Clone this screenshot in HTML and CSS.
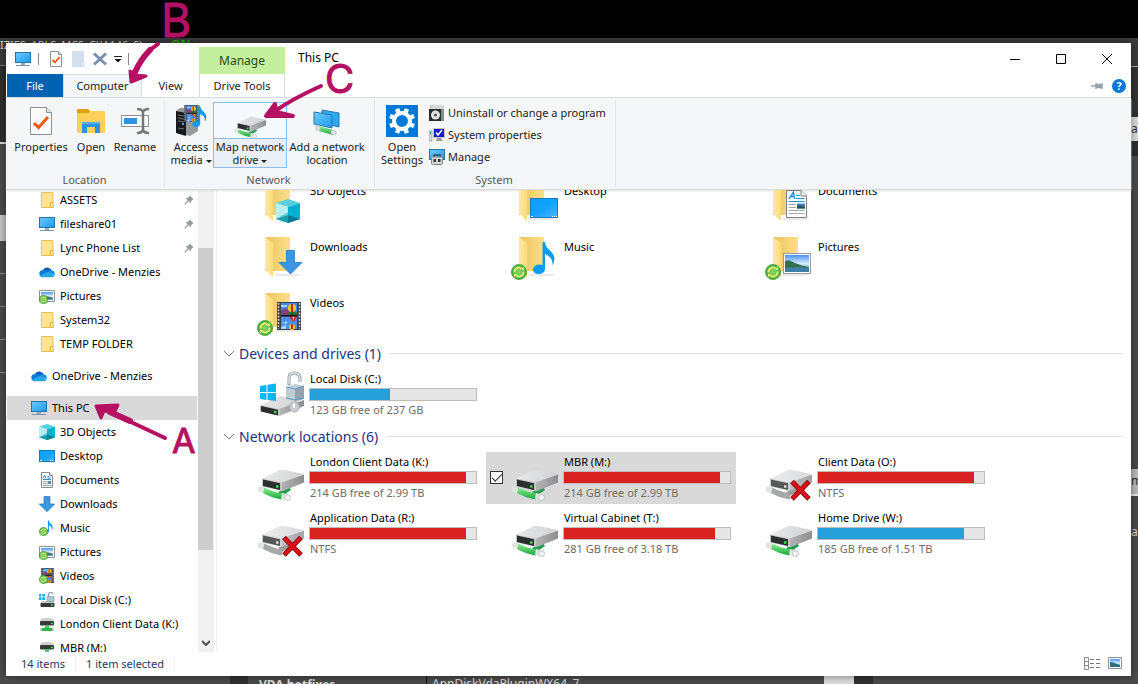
FILE: index.html
```html
<!DOCTYPE html>
<html lang="en">
<head>
<meta charset="utf-8">
<title>This PC</title>
<link rel="stylesheet" href="styles.css">
</head>
<body>
<svg class="defs" aria-hidden="true">
  <defs>
    <linearGradient id="gScreen" x1="0" y1="0" x2="1" y2="1"><stop offset="0" stop-color="#6fcbff"/><stop offset="1" stop-color="#1a9af0"/></linearGradient>
    <linearGradient id="gDesk" x1="0" y1="0" x2="1" y2="1"><stop offset="0" stop-color="#109df9"/><stop offset=".5" stop-color="#12a2ff"/><stop offset="1" stop-color="#45b6ff"/></linearGradient>
    <linearGradient id="gBack" x1="0" y1="0" x2="1" y2="0"><stop offset="0" stop-color="#e9c25c"/><stop offset="1" stop-color="#ffe08a"/></linearGradient>
    <linearGradient id="gFlap" x1="0" y1="0" x2="1" y2="0"><stop offset="0" stop-color="#ffe9a4"/><stop offset="1" stop-color="#fbd978"/></linearGradient>
    <linearGradient id="gSky" x1="0" y1="0" x2="0" y2="1"><stop offset="0" stop-color="#4a92f0"/><stop offset=".5" stop-color="#d5ecfb"/><stop offset="1" stop-color="#5ba0cf"/></linearGradient>
    <linearGradient id="gSide" x1="0" y1="0" x2="1" y2="0"><stop offset="0" stop-color="#b5b5b7"/><stop offset="1" stop-color="#8d8d90"/></linearGradient>
    <linearGradient id="gTop" x1="0" y1="0" x2="1" y2="0"><stop offset="0" stop-color="#e9e9eb"/><stop offset="1" stop-color="#d0d1d4"/></linearGradient>
    <linearGradient id="gPipe" x1="0" y1="0" x2="0" y2="1"><stop offset="0" stop-color="#8df08f"/><stop offset="1" stop-color="#17a63c"/></linearGradient>
    <radialGradient id="gSync"><stop offset="0" stop-color="#8fd86d"/><stop offset="1" stop-color="#45aa3c"/></radialGradient>
  </defs>
  <symbol id="sync" viewBox="0 0 16 16"><circle cx="8" cy="8" r="7.6" fill="url(#gSync)" stroke="#3b9c3a" stroke-width=".7"/><path d="M3.500 8.500A4.500 4.500 0 0 1 10.500 4.300M12.500 7.500A4.500 4.500 0 0 1 5.500 11.700" fill="none" stroke="#e7f06d" stroke-width="1.800"/><path d="M9.300 5.900h3.700V2.400zM6.700 10.100H3v3.500z" fill="#e7f06d"/></symbol>
  <symbol id="pc" viewBox="0 0 16 16"><rect x=".5" y="1.5" width="15" height="10" fill="url(#gScreen)" stroke="#2474a8"/><path d="M6 12h4v2H6z" fill="#8faec2"/><path d="M1 14.500h14" stroke="#7894a8" stroke-width="1"/></symbol>
  <symbol id="folder" viewBox="0 0 16 16"><path d="M2.500 .5h11.500v15H2.500z" fill="#ffe38f" stroke="#e8c24b"/><path d="M11.500 10.500h2.500v5h-2.500z" fill="#ffefb5" stroke="#e3b93c"/></symbol>
  <symbol id="pin" viewBox="0 0 12 12"><path d="M7 .5 11.500 5 10 5.700 8.600 7.400 8.300 10 5.700 7.500 1.500 11.500.8 11.300.5 10.500 4.500 6.300 2 3.800 4.600 3.400 6.300 2z" fill="#8d99a3"/></symbol>
  <symbol id="cloud" viewBox="0 0 16 16"><path d="M4 6.500A4.600 4.600 0 0 1 12.500 6L9 9z" fill="#0b5fbe"/><path d="M3.500 6.200c2-1 4 0 5.500 1.500L4 13A3.400 3.400 0 0 1 3.500 6.200z" fill="#0f78d4"/><path d="M12 6a3.700 3.700 0 0 1 3.500 5L8.500 8.500C9.500 6.700 10.500 6 12 6z" fill="#1590df"/><path d="M1.200 11.500 8.500 8l7 3.200a2.600 2.600 0 0 1-2.500 2H4a3.300 3.300 0 0 1-2.800-1.700z" fill="#27a4ea"/></symbol>
  <symbol id="pics" viewBox="0 0 16 16"><path d="M.5 2.500h15v11H.5z" fill="#fff" stroke="#8d9296"/><path d="M2 4h12v8H2z" fill="url(#gSky)"/><path d="M2 8.500c4-1 7 0 12 1.500v1H2z" fill="#47745c"/><use href="#sync" x="0" y="7" width="9" height="9"/></symbol>
  <symbol id="cube" viewBox="0 0 24 24"><path d="M12 0 24 4 12 8 0 4z" fill="#54cfdd"/><path d="M0 4l12 4v16L0 20z" fill="#b9edf1"/><path d="M0 20l12-7v11z" fill="#5cd0da"/><path d="M12 8l12-4v16l-12 4z" fill="#00b2d0"/><path d="M12 16l12 4-12 4z" fill="#047b92"/><path d="M12 16 0 20l12 4z" fill="#1d9eae"/></symbol>
  <symbol id="desk" viewBox="0 0 16 16"><rect x=".5" y="2.500" width="15" height="11" fill="url(#gDesk)" stroke="#1878bd"/><path d="M1 12.500h2m8 0h1m1 0h1" stroke="#fff"/></symbol>
  <symbol id="doc" viewBox="0 0 16 16"><path d="M2.500.5h8l3 3v12h-11z" fill="#fff" stroke="#85898c"/><path d="M10.500.5v3h3" fill="#eee" stroke="#85898c"/><path d="M4 7.500h8M8.500 4.500H10M8.500 6H12" stroke="#2a8ed6"/><path d="M4 6.500 5.500 3 7 6.500" stroke="#2a8ed6" fill="none"/><path d="M4 9.500h3.500M4 11.500h3.500M4 13.500h8" stroke="#9ba0a3"/><path d="M8.500 9h3.500v3H8.500z" fill="#5a88ad"/></symbol>
  <symbol id="down" viewBox="0 0 16 16"><path d="M5 .5h6v7.500h4.700L8 15.700.3 8H5z" fill="#3b97e5" stroke="#2277c0" stroke-width=".7"/></symbol>
  <symbol id="note" viewBox="0 0 22 32"><path d="M9.500 0h2.500c.5 5 3.500 7 6 9.500 4.500 4.500 4 9.500 1.500 14 .5-6-2.500-9.500-7.500-11.500V27c0 3-3 5-6.500 5S0 30.300 0 27.500 3 22.500 6.500 22.500c1.200 0 2.200.2 3 .6z" fill="#0a9cf2"/></symbol>
  <symbol id="film" viewBox="0 0 24 28"><path d="M0 0h24v28H0z" fill="#3d4045"/><path d="M1.500 1v26M22.500 1v26" stroke="#e8e8e8" stroke-width="1.500" stroke-dasharray="1.700 1.500"/><path d="M4 1h16v12H4z" fill="#3d8cf0"/><path d="M4 14.500h16V27H4z" fill="#4b90ee"/><path d="M4 9l5-3 4 4 3-2 4 3v2H4z" fill="#8a3f76"/><path d="M10 12c3-3 7-3 10-1v2H10z" fill="#2a7336"/><path d="M4 3h6v2H4z" fill="#a9d5ff"/><circle cx="15" cy="6" r="4" fill="#f4c81e"/><path d="M14 2h2v8h-2z" fill="#c62617"/><path d="M14 11h2v1.500h-2z" fill="#5a2d0c"/><path d="M12 14.500h8l-3.500 6z" fill="#c52c1c"/><path d="M15.500 14.500h2l-1 5z" fill="#f4c81e"/><circle cx="15" cy="25" r="3" fill="#f4c81e"/><path d="M14 22.300h2V27h-2z" fill="#c62617"/><path d="M5 21l5-2v3zM4 25l5-2v4H4z" fill="#a9d5ff"/><path d="M4 13.700h16" stroke="#16181b" stroke-width="1.500"/></symbol>
  <symbol id="videos" viewBox="0 0 16 16"><use href="#film" x="2" y="0" width="13" height="15"/><use href="#sync" x="0" y="7" width="9" height="9"/></symbol>
  <symbol id="music" viewBox="0 0 16 16"><use href="#note" x="5" y="0" width="9" height="14"/><use href="#sync" x="0" y="7" width="9" height="9"/></symbol>
  <symbol id="disk" viewBox="0 0 16 16"><path d="M0 2h2.500v2.500H0zm3.300 0H6v2.500H3.300zM0 5.300h2.500V8H0zm3.300 0H6V8H3.300z" fill="#12b1ee"/><path d="M3 9h11l1.500 2v1h-14v-1z" fill="#c8cacc"/><rect x="1.500" y="11" width="14" height="4" rx="1" fill="#37393b"/><path d="M12 13h2" stroke="#3ee65a" stroke-width="1.500"/><path d="M9.500 5V2.500a2.300 2.300 0 0 1 4.500-.5" fill="none" stroke="#93a5b1" stroke-width="1.300"/><path d="M8 4.500h7v5H8z" fill="#b2c6d2" stroke="#7793a5" stroke-width=".6"/></symbol>
  <symbol id="net" viewBox="0 0 16 16"><path d="M3 2h10l2 3v1H1V5z" fill="#cfd1d3"/><rect x="1" y="5" width="14" height="4.500" rx="1" fill="#37393b"/><path d="M12 7.500h2" stroke="#3ee65a" stroke-width="1.500"/><path d="M6 9.500h4v3H6z" fill="#4fc266"/><path d="M1 12h14v3H1z" fill="#c5ccc7"/><path d="M3 12h10v3H3z" fill="#2fb44a"/></symbol>
  <symbol id="folder48" viewBox="0 0 48 48"><path d="M20 42h26l-5 2H18z" fill="#e9e9e9"/><path d="M9 5h25v34H9z" fill="url(#gBack)"/><path d="M9 5l8.500 6.500L17 45l-8-7.500z" fill="url(#gFlap)"/></symbol>
  <symbol id="t-cube" viewBox="0 0 48 48"><use href="#folder48"/><use href="#cube" x="20" y="23" width="24" height="24"/></symbol>
  <symbol id="t-desk" viewBox="0 0 48 48"><use href="#folder48"/><rect x="20.500" y="22.500" width="27" height="19" fill="url(#gDesk)" stroke="#1878bd"/><path d="M21 40.500h2m19 0h1m1 0h1m1 0h1" stroke="#fff"/></symbol>
  <symbol id="t-doc" viewBox="0 0 48 48"><use href="#folder48"/><path d="M22.500 14.500H37l5.500 5.500v21.500h-20z" fill="#fff" stroke="#7c8083"/><path d="M37 14.500V20h5.500" fill="#eee" stroke="#7c8083"/><path d="M32 19.500h4m-4 3h8.500M24.500 25.500h16" stroke="#1f94d6"/><path d="M25 23l4.500-7 1 7m-4-2.500h4" fill="none" stroke="#1f94d6" stroke-width="1.400"/><path d="M24.500 28.500H32m-7.500 3H32m-7.500 3h16m-16 3h16" stroke="#a3a6a8"/><path d="M33 27.500h8v5h-8z" fill="#447db8"/><path d="M33 30c3-1 5 0 8 1v1.500h-8z" fill="#26525a"/></symbol>
  <symbol id="t-down" viewBox="0 0 48 48"><use href="#folder48"/><path d="M30.500 18.500h8v12H46L34.500 42 23 30.500h7.500z" fill="#3b97e5" stroke="#2277c0" stroke-width=".8"/></symbol>
  <symbol id="t-music" viewBox="0 0 48 48"><use href="#folder48"/><use href="#note" x="23" y="10" width="22" height="32"/><use href="#sync" x="1" y="32" width="16" height="16"/></symbol>
  <symbol id="t-pics" viewBox="0 0 48 48"><use href="#folder48"/><rect x="19.500" y="21.500" width="27" height="20" fill="#fff" stroke="#9a9da0"/><path d="M21 23h24v17H21z" fill="url(#gSky)"/><path d="M21 29c4-2 6 0 10 2 5 2 9 3 14 4v1c-8 1-16 0-24 1z" fill="#38704f"/><path d="M21 36c8-1 16-1 24 0v4H21z" fill="#3d7fa9"/><use href="#sync" x="1" y="32" width="16" height="16"/></symbol>
  <symbol id="t-video" viewBox="0 0 48 48"><use href="#folder48"/><use href="#film" x="21" y="14" width="24" height="28"/><use href="#sync" x="1" y="32" width="16" height="16"/></symbol>
  <symbol id="drive" viewBox="0 0 48 48"><path d="M6 24.500 24 16q2-.5 4 0l20 4-22 9z" fill="url(#gTop)"/><path d="M25.500 28.500 48 20.500v8l-22.500 9z" fill="url(#gSide)"/><path d="M6 24.500l20 4V37L6 32.500z" fill="#c3c4c6"/><path d="M7 25.500l17 3.700V36L7 32z" fill="#2c2e30"/></symbol>
  <symbol id="t-net" viewBox="0 0 48 48"><path d="M22 38l11-5 2 3-9 6z" fill="#1f9d4e"/><use href="#drive"/><path d="M20 32.500h2.500" stroke="#35e040" stroke-width="2.500"/><path d="M8 33.500q12 5.500 18 5.500v6.500Q16 44 7 39z" fill="url(#gPipe)"/><path d="M3 32l5 1.500-1 5.500-5-1.500q-1-4 1-5.500zM26 39l6 1.500-1 5.500-6-1z" fill="#e2e4e4"/><circle cx="31.500" cy="43.500" r="3" fill="#f2f3f3" stroke="#b4b7b8" stroke-width=".8"/></symbol>
  <symbol id="t-off" viewBox="0 0 48 48"><path d="M22 38l11-5 2 3-9 6z" fill="#9b9b9b"/><use href="#drive" opacity=".8"/><path d="M20 32.500h2.500" stroke="#ddd" stroke-width="2.500"/><path d="M8 33.500q12 5.500 18 5.500v6.500Q16 44 7 39z" fill="#a7a8a9"/><path d="M3 32l5 1.500-1 5.500-5-1.500q-1-4 1-5.500z" fill="#e2e4e4"/><path d="M28 27.500l17 17.500m0-17.500L28 45" stroke="#8d0910" stroke-width="5"/><path d="M28.500 28l16 16.500m0-16.500-16 16.500" stroke="#e01019" stroke-width="3.200"/></symbol>
  <symbol id="t-local" viewBox="0 0 48 48"><path d="M4 34.500 24 25l22 4-22 9z" fill="url(#gTop)"/><path d="M23 38l25-9v6l-25 10z" fill="url(#gSide)"/><path d="M4 34l20 4v7L4 40.500z" fill="#c3c4c6"/><path d="M5 35l17 3.700v5.700L5 40.500z" fill="#2c2e30"/><path d="M18 41h2.500" stroke="#35e040" stroke-width="2.500"/><path d="M4 15l6.500-1v7H4zm7.500-1.200L20 12.500V21h-8.500zM4 22h6.500v7L4 28zm7.500 0H20v8l-8.500-1z" fill="#0db4f2"/><circle cx="38.500" cy="36" r="5" fill="#c9ccce" stroke="#989c9f" stroke-width=".7"/><path d="M38 32v5" stroke="#fff" stroke-width="2"/><path d="M33 14V7q0-5 5.500-5T44 8v3" fill="none" stroke="#8f989e" stroke-width="3"/><path d="M33 13V7q0-5 5.500-5T44 8v3" fill="none" stroke="#e4e8eb" stroke-width="1.400"/><path d="M30 16l9-3 9 2v13l-9 2-9-2z" fill="#c0ccd4"/><path d="M39 18l9-3v13l-9 2z" fill="#93a4b0"/><path d="M30 16l9 2 9-3M30 27l9 2 9-2" fill="none" stroke="#5b9cc9"/></symbol>
  <symbol id="props" viewBox="0 0 32 32"><path d="M5.500 2.500h16l5 5v22h-21z" fill="#fafafa" stroke="#8c9093"/><path d="M21.500 2.500v5h5" fill="#e5e5e5" stroke="#8c9093"/><path d="M9 18l4.500 4.500L23 12" fill="none" stroke="#f0590f" stroke-width="3"/></symbol>
  <symbol id="props16" viewBox="0 0 16 16"><path d="M2.500.5h8l3 3v12h-11z" fill="#fafafa" stroke="#8c9093"/><path d="M10.500.5v3h3" fill="#e5e5e5" stroke="#8c9093"/><path d="M4.500 9l2.500 2.500L11.500 6" fill="none" stroke="#f0590f" stroke-width="1.800"/></symbol>
  <symbol id="open" viewBox="0 0 32 32"><path d="M2 5q0-1 1-1h10l2 2h14q1 0 1 1v20q0 1-1 1H3q-1 0-1-1z" fill="#fdd05a"/><path d="M2 5q0-1 1-1h10l2 2-2 2H2z" fill="#dfa000"/><path d="M7 17h18v11h-5v-6h-8v6H7z" fill="#2f93e0"/><path d="M7 17h18v2H7z" fill="#57aeed"/></symbol>
  <symbol id="rename" viewBox="0 0 32 32"><rect x="2.500" y="10.500" width="27" height="11" fill="#fdfdfd" stroke="#8c9093"/><rect x="5" y="13" width="13" height="6" fill="#2f93e0"/><path d="M18 4q5 0 6 3 1-3 6-3M18 28q5 0 6-3 1 3 6 3M24 6v20" fill="none" stroke="#74787b" stroke-width="2.500"/></symbol>
  <symbol id="access" viewBox="0 0 32 32"><path d="M1 6l4-3h18v23l-8 5-14-4z" fill="#97999c"/><path d="M1 6l10 2v23L1 28z" fill="#17191b"/><path d="M3 10l6 1m-6 2 6 1m-6 2 6 1m-6 6 6 1" stroke="#6e7377"/><path d="M7 19h2" stroke="#32a8f5" stroke-width="2"/><use href="#film" x="9" y="0" width="15" height="17"/><use href="#note" x="17" y="1" width="15" height="21"/></symbol>
  <symbol id="mapnet" viewBox="0 0 32 32"><use href="#t-net" x="-1" y="0" width="33" height="33"/></symbol>
  <symbol id="addnet" viewBox="0 0 32 32"><path d="M11 5l17 3v14l-17-4z" fill="#2ca7f2" stroke="#2878aa"/><path d="M3 7l18 3v13L3 19z" fill="url(#gScreen)" stroke="#2878aa"/><path d="M8 21l14 4v5L8 26z" fill="url(#gPipe)"/><path d="M5 20l4 1v5l-4-1zM20 25l5 1v4l-5-1z" fill="#dfe2e2" stroke="#b3b6b7" stroke-width=".6"/></symbol>
  <symbol id="gear" viewBox="0 0 32 32"><path d="M0 0h32v32H0z" fill="#0078d7"/><circle cx="16" cy="16" r="8" fill="none" stroke="#fff" stroke-width="4"/><path d="M16 3v5m0 16v5M3 16h5m16 0h5M6.800 6.800l3.500 3.500m11.400 11.400 3.500 3.500m0-18.400-3.500 3.500M10.300 21.700l-3.500 3.500" stroke="#fff" stroke-width="4.500" transform="rotate(22.500 16 16)"/></symbol>
  <symbol id="uninst" viewBox="0 0 16 16"><path d="M1 0h13l1 3v13H3z" fill="#b8ad86"/><path d="M2 0h13v4H2z" fill="#d5d7d9"/><path d="M10 4h5v12h-5z" fill="#6e9885"/><rect y="4" width="12" height="12" fill="#2a2a2a"/><circle cx="6.500" cy="10" r="4.500" fill="#dfe2e3"/><circle cx="6.500" cy="10" r="1.500" fill="#555"/></symbol>
  <symbol id="sysprop" viewBox="0 0 16 16"><path d="M4 1h12v10H4z" fill="#c6c4bd"/><path d="M5 2h10v8H5z" fill="#1020c4"/><path d="M7 5.500 9 8l4-5" fill="none" stroke="#fff" stroke-width="1.500"/><path d="M8 11h4l2 3H7z" fill="#9c9b98"/><path d="M0 4h3v10H0z" fill="#d9d9d9" stroke="#8a8a8a" stroke-width=".6"/><path d="M1 5h1v2H1z" fill="#22a52c"/></symbol>
  <symbol id="manage" viewBox="0 0 16 16"><rect x=".5" y=".5" width="15" height="10" fill="url(#gScreen)" stroke="#2474a8"/><path d="M5 8V6h6v2" fill="none" stroke="#454545" stroke-width="1.500"/><rect x="2.500" y="8" width="11" height="7.500" rx="1" fill="#d5d7d8" stroke="#848789"/><path d="M4.500 10H7v3H4.500zM9 10h2.500v3H9z" fill="#343638"/></symbol>
</svg>

<div class="backdrop" aria-hidden="true">
  <div class="blackout"></div>
  <div class="edge edge-left"></div>
  <div class="edge edge-right"></div>
  <span class="bt bt-name">IZIES_APLS_MCS_CXA146_S)</span><span class="bt bt-on">ON</span>
  <span class="bt bt-ag">ag</span><span class="bt bt-m">m</span><span class="bt bt-ap">ap</span>
  <div class="strip"></div>
  <span class="bt bt-vda">VDA hotfixes</span><span class="bt bt-app">AppDiskVdaPluginWX64_7</span>
</div>

<main class="window">
  <header class="top">
    <div class="qat">
      <svg class="i16"><use href="#pc"/></svg>
      <i class="bar first"></i>
      <button class="q" aria-label="Properties"><svg class="i16"><use href="#props16"/></svg></button>
      <button class="q" aria-label="New folder"><svg class="i16" viewBox="0 0 16 16"><path d="M2 0h12v16H2z" fill="#d5e0ef"/><path d="M11 10h3v6h-3z" fill="#e6edf7" stroke="#bccbdf" stroke-width=".6"/></svg></button>
      <button class="q" aria-label="Delete"><svg class="i16" viewBox="0 0 16 16"><path d="M2 2.500l12 11m0-11-12 11" stroke="#7b8eb0" stroke-width="3"/></svg></button>
      <button class="q" aria-label="Customize toolbar"><svg width="8" height="8" viewBox="0 0 8 8"><path d="M0 1.500h8" stroke="#222"/><path d="M.5 4h7L4 7.500z" fill="#111"/></svg></button>
      <i class="bar"></i>
    </div>
    <div class="context">Manage</div>
    <h1 class="title">This PC</h1>
    <div class="controls">
      <button aria-label="Minimize"><svg width="12" height="12"><path d="M1 6.500h10" stroke="#000"/></svg></button>
      <button aria-label="Maximize"><svg width="12" height="12"><path d="M1.500 1.500h9v9h-9z" fill="none" stroke="#000"/></svg></button>
      <button aria-label="Close"><svg width="12" height="12"><path d="M1 1l10 10m0-10L1 11" stroke="#000"/></svg></button>
    </div>
    <nav class="tabs">
      <button class="tab file">File</button>
      <button class="tab active">Computer</button>
      <button class="tab">View</button>
    </nav>
    <button class="tab tools">Drive Tools</button>
    <div class="help">
      <button aria-label="Pin the ribbon"><svg width="12" height="8" viewBox="0 0 12 8"><path d="M0 4h5M5 1v6m1-4.500h5v3H6zM11 1v6" stroke="#98a2aa" stroke-width="1.500" fill="#98a2aa"/></svg></button>
      <button class="q-mark" aria-label="Help">?</button>
    </div>
  </header>

  <section class="ribbon" aria-label="Ribbon">
    <div class="group location">
      <div class="tools-row">
        <button class="big"><svg class="i32"><use href="#props"/></svg><span>Properties</span></button>
        <button class="big"><svg class="i32"><use href="#open"/></svg><span>Open</span></button>
        <button class="big"><svg class="i32"><use href="#rename"/></svg><span>Rename</span></button>
      </div>
      <p class="caption">Location</p>
    </div>
    <div class="group network">
      <div class="tools-row">
        <button class="big"><svg class="i32"><use href="#access"/></svg><span>Access<br>media <i class="caret"></i></span></button>
        <button class="big split"><svg class="i32"><use href="#mapnet"/></svg><span>Map network<br>drive <i class="caret"></i></span></button>
        <button class="big"><svg class="i32"><use href="#addnet"/></svg><span>Add a network<br>location</span></button>
      </div>
      <p class="caption">Network</p>
    </div>
    <div class="group system">
      <div class="tools-row">
        <button class="big"><svg class="i32"><use href="#gear"/></svg><span>Open<br>Settings</span></button>
        <div class="stack">
          <button class="small"><svg class="i16"><use href="#uninst"/></svg>Uninstall or change a program</button>
          <button class="small"><svg class="i16"><use href="#sysprop"/></svg>System properties</button>
          <button class="small"><svg class="i16"><use href="#manage"/></svg>Manage</button>
        </div>
      </div>
      <p class="caption">System</p>
    </div>
  </section>

  <div class="content">
    <nav class="side" aria-label="Navigation pane">
      <ul class="tree">
        <li><a href="#"><svg class="i16"><use href="#folder"/></svg>ASSETS<svg class="pin"><use href="#pin"/></svg></a></li>
        <li><a href="#"><svg class="i16"><use href="#pc"/></svg>fileshare01<svg class="pin"><use href="#pin"/></svg></a></li>
        <li><a href="#"><svg class="i16"><use href="#folder"/></svg>Lync Phone List<svg class="pin"><use href="#pin"/></svg></a></li>
        <li><a href="#"><svg class="i16"><use href="#cloud"/></svg>OneDrive - Menzies</a></li>
        <li><a href="#"><svg class="i16"><use href="#pics"/></svg>Pictures</a></li>
        <li><a href="#"><svg class="i16"><use href="#folder"/></svg>System32</a></li>
        <li><a href="#"><svg class="i16"><use href="#folder"/></svg>TEMP FOLDER</a></li>
        <li class="root"><a href="#"><svg class="i16"><use href="#cloud"/></svg>OneDrive - Menzies</a></li>
        <li class="root current"><a href="#" aria-current="page"><svg class="i16"><use href="#pc"/></svg>This PC</a></li>
        <li><a href="#"><svg class="i16"><use href="#cube"/></svg>3D Objects</a></li>
        <li><a href="#"><svg class="i16"><use href="#desk"/></svg>Desktop</a></li>
        <li><a href="#"><svg class="i16"><use href="#doc"/></svg>Documents</a></li>
        <li><a href="#"><svg class="i16"><use href="#down"/></svg>Downloads</a></li>
        <li><a href="#"><svg class="i16"><use href="#music"/></svg>Music</a></li>
        <li><a href="#"><svg class="i16"><use href="#pics"/></svg>Pictures</a></li>
        <li><a href="#"><svg class="i16"><use href="#videos"/></svg>Videos</a></li>
        <li><a href="#"><svg class="i16"><use href="#disk"/></svg>Local Disk (C:)</a></li>
        <li><a href="#"><svg class="i16"><use href="#net"/></svg>London Client Data (K:)</a></li>
        <li><a href="#"><svg class="i16"><use href="#net"/></svg>MBR (M:)</a></li>
      </ul>
      <div class="scroll"><div class="thumb"></div><svg class="arrow" width="8" height="6"><path d="M0 1l4 4 4-4" fill="none" stroke="#505050" stroke-width="2"/></svg></div>
    </nav>

    <section class="files">
      <div class="files-inner">
        <div class="tiles folders">
          <div class="tile"><svg class="i48"><use href="#t-cube"/></svg><div class="info"><p>3D Objects</p></div></div>
          <div class="tile"><svg class="i48"><use href="#t-desk"/></svg><div class="info"><p>Desktop</p></div></div>
          <div class="tile"><svg class="i48"><use href="#t-doc"/></svg><div class="info"><p>Documents</p></div></div>
          <div class="tile"><svg class="i48"><use href="#t-down"/></svg><div class="info"><p>Downloads</p></div></div>
          <div class="tile"><svg class="i48"><use href="#t-music"/></svg><div class="info"><p>Music</p></div></div>
          <div class="tile"><svg class="i48"><use href="#t-pics"/></svg><div class="info"><p>Pictures</p></div></div>
          <div class="tile"><svg class="i48"><use href="#t-video"/></svg><div class="info"><p>Videos</p></div></div>
        </div>
        <h2><svg width="12" height="8"><path d="M1 1l5 5 5-5" fill="none" stroke="#777"/></svg>Devices and drives (1)</h2>
        <div class="tiles">
          <div class="tile"><svg class="i48"><use href="#t-local"/></svg><div class="info"><p>Local Disk (C:)</p><div class="meter"><div class="fill" style="width:48%"></div></div><p class="sub">123 GB free of 237 GB</p></div></div>
        </div>
        <h2><svg width="12" height="8"><path d="M1 1l5 5 5-5" fill="none" stroke="#777"/></svg>Network locations (6)</h2>
        <div class="tiles">
          <div class="tile"><svg class="i48"><use href="#t-net"/></svg><div class="info"><p>London Client Data (K:)</p><div class="meter"><div class="fill full" style="width:94%"></div></div><p class="sub">214 GB free of 2.99 TB</p></div></div>
          <div class="tile picked"><input type="checkbox" checked aria-label="Select MBR (M:)"><svg class="i48"><use href="#t-net"/></svg><div class="info"><p>MBR (M:)</p><div class="meter"><div class="fill full" style="width:94%"></div></div><p class="sub">214 GB free of 2.99 TB</p></div></div>
          <div class="tile"><svg class="i48"><use href="#t-off"/></svg><div class="info"><p>Client Data (O:)</p><div class="meter"><div class="fill full" style="width:94%"></div></div><p class="sub">NTFS</p></div></div>
          <div class="tile"><svg class="i48"><use href="#t-off"/></svg><div class="info"><p>Application Data (R:)</p><div class="meter"><div class="fill full" style="width:94%"></div></div><p class="sub">NTFS</p></div></div>
          <div class="tile"><svg class="i48"><use href="#t-net"/></svg><div class="info"><p>Virtual Cabinet (T:)</p><div class="meter"><div class="fill full" style="width:91%"></div></div><p class="sub">281 GB free of 3.18 TB</p></div></div>
          <div class="tile"><svg class="i48"><use href="#t-net"/></svg><div class="info"><p>Home Drive (W:)</p><div class="meter"><div class="fill" style="width:88%"></div></div><p class="sub">185 GB free of 1.51 TB</p></div></div>
        </div>
      </div>
    </section>
  </div>

  <footer class="status">
    <span class="count">14 items</span><span class="count">1 item selected</span>
    <div class="views">
      <button aria-label="Details view"><svg width="17" height="13"><path d="M.5.5h4v12h-4zM.5 4.500h4M.5 8.500h4" fill="none" stroke="#8a8a8a"/><path d="M6 2.500h4m2 0h4M6 6.500h4m2 0h4M6 10.500h4m2 0h4" stroke="#777"/></svg></button>
      <button aria-label="Large icons view"><svg width="14" height="12" viewBox="0 0 14 12"><path d="M.5.5h13v11H.5z" fill="#fff" stroke="#8e9194"/><path d="M2 2h10v8H2z" fill="url(#gSky)"/><path d="M2 5c4 0 6 2 10 3v2H2z" fill="#2f6f80"/></svg></button>
    </div>
  </footer>
</main>

<svg class="notes">
  <g fill="none" stroke="#b51063" stroke-linecap="round" stroke-linejoin="round">
    <path d="M158 44Q142 54 134 74" stroke-width="4"/><path d="M150 50Q141 59 135 72" stroke-width="6"/><path d="M130 71l1 11 15-6-11-1z" stroke-width="3" fill="#b51063"/>
    <path d="M321 86Q294 98 275 111" stroke-width="4"/><path d="M275 104l-9 12 27 0-17-4z" stroke-width="4" fill="#b51063"/>
    <path d="M165 438L116 415" stroke-width="4"/><path d="M130 421l-20-9" stroke-width="6"/><path d="M118 405l-22 1 5 12 3-7 10 2z" stroke-width="3" fill="#b51063"/>
  </g>
  <text x="161" y="37" class="ink ink-b">B</text>
  <text x="325" y="93" class="ink ink-c">C</text>
  <text x="172" y="453" class="ink ink-a">A</text>
</svg>
</body>
</html>
```

FILE: styles.css
```css
* { box-sizing: border-box; }
body {
  margin: 0;
  min-height: 100vh;
  padding: 43px 7px 8px 6px;
  display: flex;
  position: relative;
  overflow: hidden;
  background: #4b4b4b;
  font: 11px/14px "Noto Sans", "Open Sans", sans-serif;
  color: #000;
}
p, h1, h2, ul { margin: 0; padding: 0; font-weight: 400; }
button { margin: 0; padding: 0; border: 0; background: none; font: inherit; color: inherit; }
a { color: inherit; text-decoration: none; }
svg { display: block; flex: none; }
.defs { position: absolute; width: 0; height: 0; }
.i16 { width: 16px; height: 16px; }
.i32 { width: 32px; height: 32px; }
.i48 { width: 48px; height: 48px; }

/* Desktop behind the window */
.backdrop { position: absolute; inset: 0; overflow: hidden; }
.blackout { height: 38px; background: #000; }
.edge { position: absolute; top: 38px; bottom: 0; }
.edge-left {
  left: 0; width: 100%;
  background: linear-gradient(#3b3b3b 0 27px, #777 27px 28px, #2f2f2f 28px 104px, #ddd 104px 106px, #4b4b4b 106px 177px, #c8c8c8 177px 203px, #4b4b4b 203px 235px, #888 235px 236px, #4b4b4b 236px 268px, #888 268px 269px, #4b4b4b 269px 301px, #888 301px 302px, #4b4b4b 302px 334px, #888 334px 335px, #4b4b4b 335px);
}
.edge-right {
  right: 0; width: 8px;
  background: linear-gradient(#3b3b3b 0 28px, #aaa 28px 29px, #333 29px 79px, #ddd 79px 103px, #2d2d2d 103px 118px, #4b4b4b 118px 431px, #bbb 431px 456px, #eee 456px 458px, #4b4b4b 458px);
}
.strip {
  position: absolute; bottom: 0; left: 0; right: 0; height: 8px;
  background: linear-gradient(90deg, #4b4b4b 0 230px, #303030 230px 248px, #4b4b4b 248px 426px, #111 426px 427px, #4b4b4b 427px 824px, #ddd 824px 854px, #303030 854px 873px, #4b4b4b 873px);
}
.bt { position: absolute; color: #ddd; font-size: 12px; line-height: 16px; white-space: nowrap; }
.bt-name { left: 0; top: 37px; font-size: 11px; }
.bt-on { left: 171px; top: 37px; color: #2fa80d; font-weight: 700; }
.bt-ag { left: 1131px; top: 121px; color: #333; }
.bt-m { left: 1131px; top: 473px; color: #334; }
.bt-ap { left: 1131px; top: 524px; }
.bt-vda { left: 259px; top: 677px; font-weight: 700; }
.bt-app { left: 432px; top: 676px; }

/* Window */
.window {
  position: relative;
  flex: 1;
  min-width: 0;
  height: calc(100vh - 51px);
  padding-left: 1px;
  display: flex;
  flex-direction: column;
  background: #fff;
  box-shadow: 0 0 8px rgba(0, 0, 0, .5);
}
.top {
  display: grid;
  grid-template-columns: 192px 86px 1fr auto;
  grid-template-rows: 31px 23px;
  border-bottom: 1px solid #dadbdc;
}
.qat { display: flex; align-items: center; padding-left: 8px; gap: 6px; }
.bar { width: 1px; height: 12px; background: #888; }
.first { margin: 0 3px 0 1px; }
.context {
  margin-top: 4px;
  background: #c4ef9f;
  color: #2c4a17;
  font-size: 12px;
  line-height: 28px;
  text-align: center;
}
.title { padding-left: 13px; font-size: 12px; line-height: 30px; }
.controls { display: flex; padding-right: 1px; }
.controls button { width: 46px; display: grid; place-items: center; }
.tabs { display: flex; }
.tab { height: 23px; font-size: 11px; color: #222; }
.tabs .tab { width: 57px; }
.tabs .file { width: 56px; background: #0063b1; color: #fff; }
.tabs .active { width: 79px; background: #f5f6f7; box-shadow: inset 1px 1px #dadbdc, inset -1px 0 #dadbdc; }
.tools { box-shadow: inset 1px 0 #dadbdc, inset -1px 0 #dadbdc; }
.help { grid-column: 3 / 5; display: flex; justify-content: flex-end; align-items: center; gap: 9px; padding-right: 5px; }
.q-mark { width: 14px; height: 14px; border-radius: 50%; background: #0078d7; color: #fff; font-weight: 700; line-height: 14px; }

/* Ribbon */
.ribbon { display: flex; height: 92px; background: #f5f6f7; border-bottom: 1px solid #dadbdc; box-shadow: 0 1px 2px #ddd; position: relative; color: #222; }
.group { display: flex; flex-direction: column; justify-content: space-between; padding: 4px 0 2px; position: relative; }
.group::after { content: ""; position: absolute; right: 0; top: 2px; bottom: 2px; width: 1px; background: #e2e3e4; }
.location { width: 158px; }
.network { width: 210px; }
.system { width: 241px; }
.caption { padding-right: 3px; text-align: center; color: #555; line-height: 14px; }
.tools-row { display: flex; align-items: flex-start; }
.location .tools-row { padding-left: 6px; gap: 4px; }
.network .tools-row { padding-left: 4px; }
.system .tools-row { padding-left: 4px; gap: 4px; }
.big { display: flex; flex-direction: column; align-items: center; height: 66px; padding-top: 3px; line-height: 13px; white-space: nowrap; }
.location .big:nth-child(1) { width: 56px; }
.location .big:nth-child(2) { width: 36px; }
.location .big:nth-child(3) { width: 44px; }
.network .big:nth-child(1) { width: 44px; }
.network .big:nth-child(3) { width: 80px; }
.system .big { width: 46px; }
.big span { padding-top: 3px; }
.big.split { width: 74px; padding-top: 3px; border: 1px solid #8dbce8; background: #f5f9fd; }
.big.split span { align-self: stretch; flex: 1; padding-top: 1px; border-top: 1px solid #8dbce8; background: #e8eff7; }
.caret { display: inline-block; vertical-align: middle; border: 3px solid transparent; border-top-color: #222; border-bottom: 0; }
.stack { display: flex; flex-direction: column; }
.small { display: flex; align-items: center; gap: 3px; height: 22px; white-space: nowrap; }

/* Navigation pane */
.content { flex: 1; min-height: 0; display: flex; }
.side { width: 207px; display: flex; overflow: hidden; }
.tree { flex: 1; list-style: none; margin: -2px 1px 0 0; }
.tree a { display: flex; align-items: center; height: 24px; gap: 5px; padding: 0 3px 0 32px; white-space: nowrap; }
.tree .root { margin-top: 8px; }
.tree .root a { padding-left: 24px; }
.current { background: #d9d9d9; }
.pin { width: 10px; height: 10px; margin-left: auto; }
.scroll { width: 16px; background: #f0f0f0; display: flex; flex-direction: column; align-items: center; padding: 58px 1px 6px 0; }
.thumb { width: 100%; height: 76%; background: #cdcdcd; }
.arrow { margin-top: auto; }

/* File list */
.files { flex: 1; min-width: 0; overflow: hidden; border-left: 1px solid #f1f1f1; margin-left: 2px; }
.files-inner { margin-top: -16px; padding: 0 8px 0 6px; }
.tiles { display: grid; grid-template-columns: repeat(auto-fill, 250px); gap: 4px; padding-left: 9px; }
.tile { display: flex; align-items: center; height: 52px; padding-left: 24px; gap: 5px; position: relative; }
.picked { background: #d9d9d9; }
.info { align-self: flex-start; width: 168px; padding-top: 2px; }
.folders .info { padding-top: 9px; }
.info p { padding-left: 1px; line-height: 15px; white-space: nowrap; }
.meter { height: 13px; margin: 2px 0 1px; border: 1px solid #bcbcbc; background: #e6e6e6; }
.fill { height: 100%; background: #26a0da; }
.full { background: #da2222; }
.info .sub { color: #6d6d6d; }
.tile input { appearance: none; position: absolute; left: 4px; top: 19px; width: 13px; height: 13px; margin: 0; border: 1px solid #333; background: #fff; display: grid; place-items: center; }
.tile input::after { content: ""; width: 9px; height: 4px; border: solid #333; border-width: 0 0 1px 1px; transform: rotate(-45deg); margin-top: -3px; }
h2 { display: flex; align-items: center; height: 31px; gap: 4px; color: #1e3287; font-size: 14px; line-height: 20px; white-space: nowrap; }
h2::after { content: ""; flex: 1; height: 1px; margin-left: 4px; background: #e2e2e2; }

/* Status bar */
.status { display: flex; align-items: center; height: 24px; padding: 0 9px 0 4px; color: #1e395b; }
.count { padding: 0 10px; border-right: 1px solid #eee; line-height: 12px; }
.views { margin-left: auto; display: flex; align-items: center; gap: 7px; padding-bottom: 2px; }

/* Hand-drawn marks */
.notes { position: absolute; inset: 0; width: 100%; height: 100%; pointer-events: none; }
.ink { font-family: Inter, sans-serif; fill: #b51063; stroke: #b51063; stroke-width: 1px; stroke-linejoin: round; }
.ink-b { font-size: 46px; }
.ink-c { font-size: 40px; }
.ink-a { font-size: 34px; }
```
